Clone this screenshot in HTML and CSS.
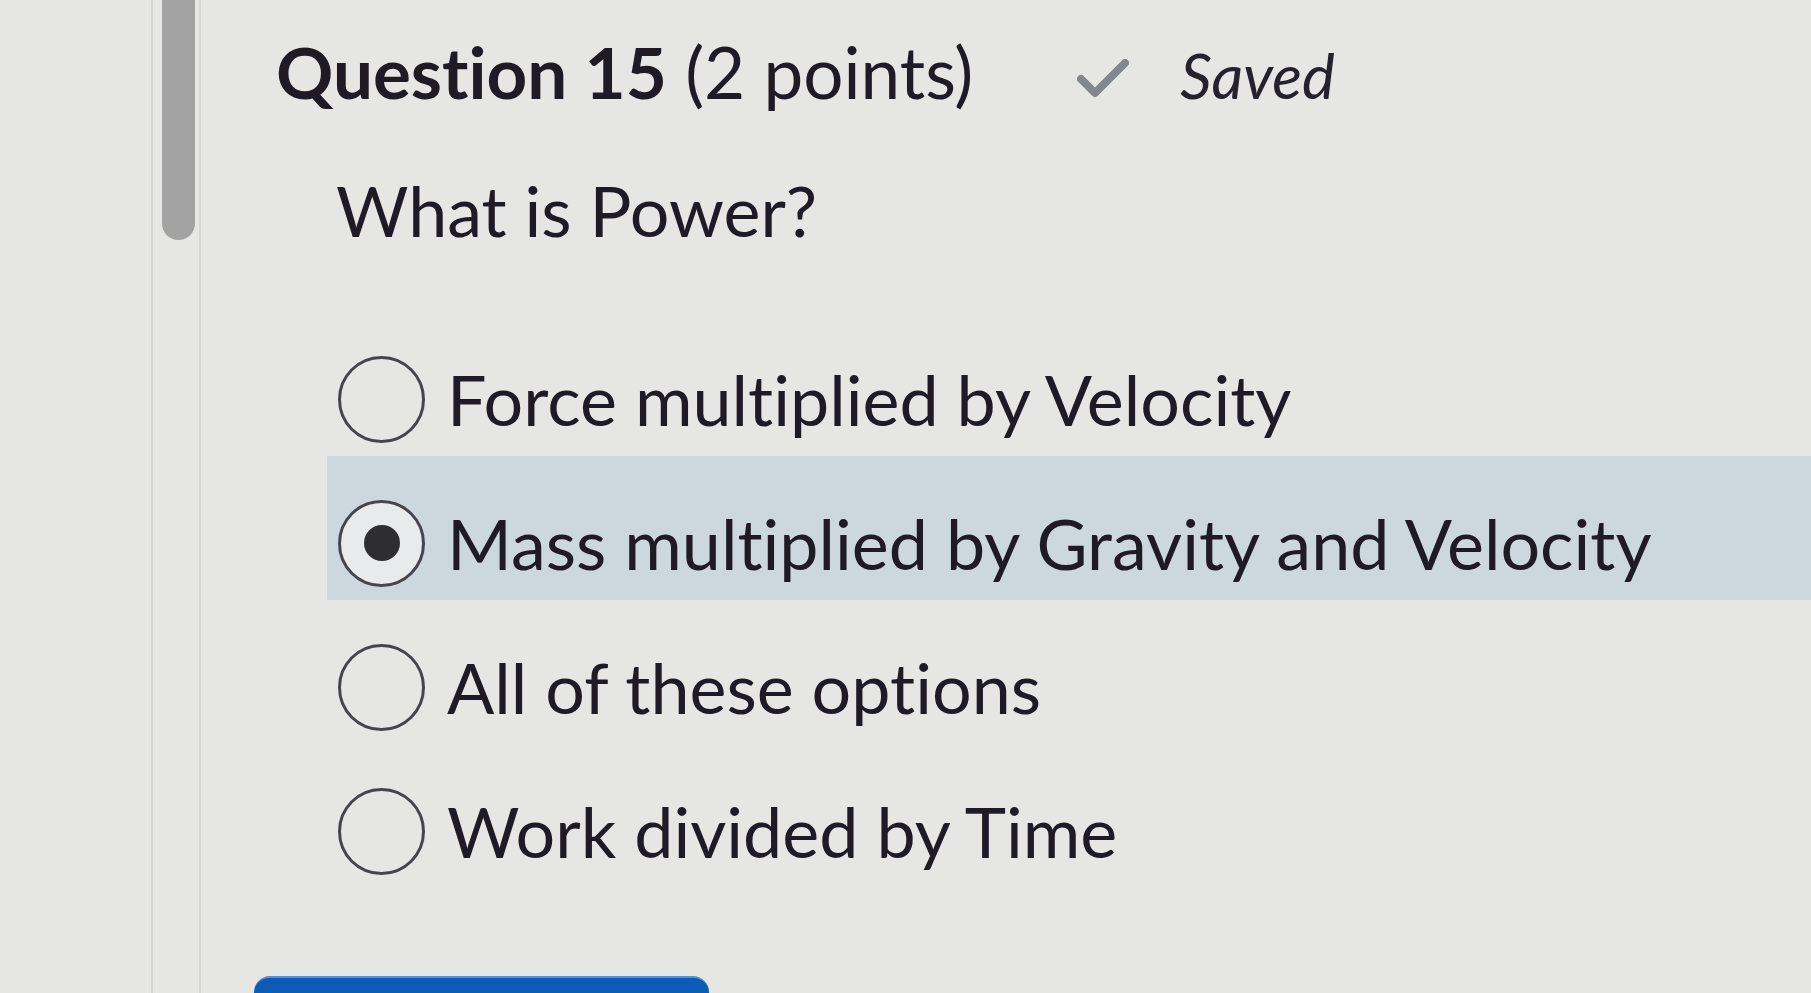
FILE: index.html
```
<!DOCTYPE html>
<html lang="en">
<head>
<meta charset="utf-8">
<title>Question 15</title>
<link rel="stylesheet" href="styles.css">
</head>
<body>
<div class="page">
  <div class="gutter"></div>
  <div class="track"><div class="thumb"></div></div>
  <main class="content">
    <header class="q-head">
      <h2 class="q-title"><span class="q-num">Question 15</span> (2 points)</h2>
      <span class="saved">
        <svg class="check" viewBox="0 0 52 40" aria-hidden="true"><polyline points="4,20 18,34 48,4" fill="none" stroke="#84878a" stroke-width="8" stroke-linecap="round" stroke-linejoin="round"/></svg>
        <em class="saved-text">Saved</em>
      </span>
    </header>
    <p class="q-text">What is Power?</p>
    <ul class="options">
      <li class="option"><span class="radio"></span><span class="label">Force multiplied by Velocity</span></li>
      <li class="option selected"><span class="radio"></span><span class="label">Mass multiplied by Gravity and Velocity</span></li>
      <li class="option"><span class="radio"></span><span class="label">All of these options</span></li>
      <li class="option"><span class="radio"></span><span class="label">Work divided by Time</span></li>
    </ul>
    <div class="actions"><div class="btn"></div></div>
  </main>
</div>
</body>
</html>
```
FILE: styles.css
```
html, body {
  margin: 0;
  padding: 0;
}
body {
  background: #e6e6e4;
  font-family: Lato, "Open Sans", "Liberation Sans", sans-serif;
  font-variant-ligatures: none;
  font-feature-settings: "liga" 0, "clig" 0;
  color: #1f1b24;
  overflow: hidden;
}
.page {
  display: flex;
  height: 993px;
  overflow: hidden;
}
.gutter {
  width: 151px;
  flex: none;
}
.track {
  width: 50px;
  flex: none;
  box-sizing: border-box;
  border-left: 2px solid #d4d4d2;
  border-right: 2px solid #d6d6d4;
}
.thumb {
  margin-left: 9px;
  width: 33px;
  height: 240px;
  background: #a3a3a3;
  border-radius: 0 0 17px 17px;
}
.content {
  flex: 1;
  padding-top: 29px;
}
.q-head {
  display: flex;
  align-items: baseline;
  padding-left: 75px;
}
.q-title {
  margin: 0;
  font-size: 71px;
  font-weight: 400;
  line-height: 1.2;
}
.q-num {
  font-weight: 700;
}
.saved {
  display: flex;
  align-items: baseline;
  margin-left: 104px;
}
.check {
  width: 52px;
  height: 40px;
  margin-bottom: 2px;
}
.saved-text {
  margin-left: 51px;
  font-size: 62px;
  font-style: italic;
  color: #26222c;
}
.q-text {
  margin: 54px 0 0;
  padding-left: 135px;
  font-size: 70px;
  line-height: 1.2;
}
.options {
  list-style: none;
  margin: 60px 0 0;
  padding: 0 0 0 126px;
}
.option {
  height: 144px;
  box-sizing: border-box;
  display: flex;
  align-items: center;
  gap: 22px;
  padding-top: 30px;
  padding-left: 11px;
}
.option.selected {
  background: #cdd7de;
}
.radio {
  flex: none;
  width: 87px;
  height: 87px;
  box-sizing: border-box;
  border: 3px solid #46454d;
  border-radius: 50%;
  display: grid;
  place-items: center;
}
.selected .radio {
  background: #e8eaeb;
}
.selected .radio::after {
  content: "";
  width: 36px;
  height: 36px;
  border-radius: 50%;
  background: #2e2d31;
}
.label {
  font-size: 70px;
  line-height: 1.2;
}
.actions {
  margin-top: 88px;
  padding-left: 53px;
}
.btn {
  width: 455px;
  height: 60px;
  background: #0b5bb7;
  border-top: 2px solid #5b8fd0;
  border-radius: 16px 16px 0 0;
}
```
